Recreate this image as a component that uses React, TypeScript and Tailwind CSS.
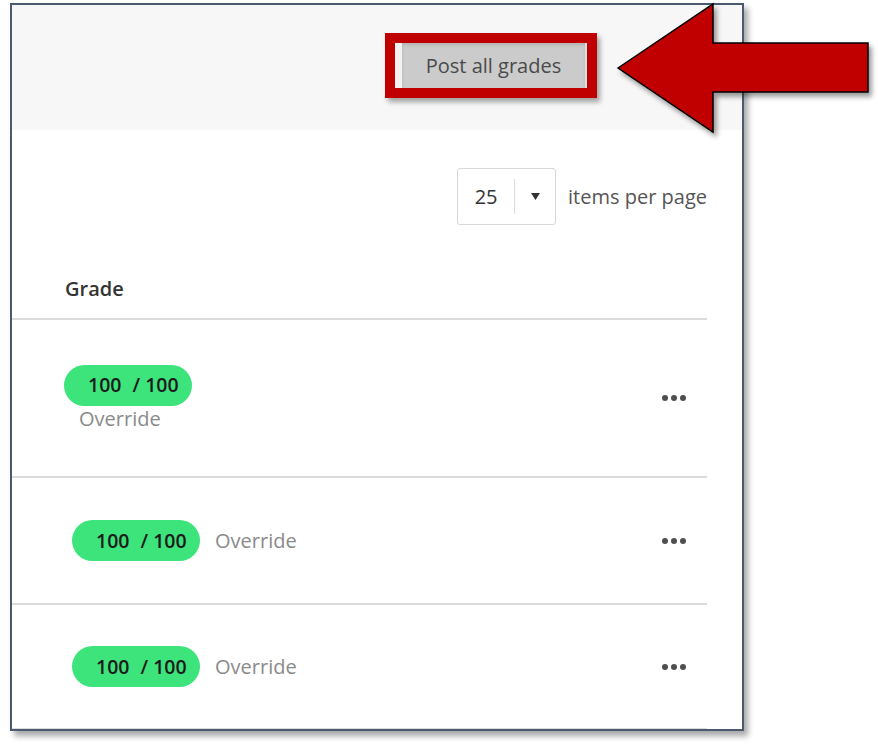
import React from "react";

function Dots() {
  return (
    <div className="flex items-center gap-[3px]">
      <span className="block w-[6px] h-[6px] rounded-full bg-[#4f4f4f]" />
      <span className="block w-[6px] h-[6px] rounded-full bg-[#4f4f4f]" />
      <span className="block w-[6px] h-[6px] rounded-full bg-[#4f4f4f]" />
    </div>
  );
}

function Pill() {
  return (
    <div className="flex items-center h-[41px] w-[128px] rounded-full bg-[#3de37b] pl-[24px] text-[19.5px] font-semibold text-[#1b1b1b] leading-none">
      <span>100</span>
      <span className="ml-[11px]">/ 100</span>
    </div>
  );
}

export default function App() {
  return (
    <div
      className="relative w-[878px] h-[749px] bg-white overflow-hidden"
      style={{ fontFamily: '"Open Sans", "Noto Sans", sans-serif' }}
    >
      <div className="ml-[10px] mt-[3px] w-[734px] h-[728px] border-2 border-[#4b5a70] bg-white shadow-[4px_5px_6px_rgba(0,0,0,0.35)] overflow-hidden flex flex-col">
        {/* header */}
        <div className="h-[125px] shrink-0 bg-[#f7f7f7] pt-[28px] pl-[373px]">
          <div className="w-[212px] h-[65px] border-[10px] border-[#c00000] shadow-[3px_4px_5px_rgba(0,0,0,0.35)]">
            <div className="h-full w-full flex items-center justify-center bg-[#cbcbcb] border-l-[7px] border-l-[#f2f2f2] border-r-[2px] border-r-[#e2e2e2] shadow-[inset_0_2px_3px_rgba(0,0,0,0.12)] text-[20px] text-[#4a4a4a]">
              Post all grades
            </div>
          </div>
        </div>

        <div className="w-[695px] flex flex-col">
          {/* pagination */}
          <div className="mt-[38px] flex justify-end items-center gap-[12px]">
            <div className="w-[99px] h-[57px] border border-[#d8d8d8] rounded-[3px] flex items-center bg-white">
              <span className="w-[56px] text-center text-[20px] text-[#333]">25</span>
              <span className="block w-px h-[35px] bg-[#dddddd]" />
              <span className="flex-1 flex justify-center">
                <svg width="9" height="7" viewBox="0 0 9 7">
                  <polygon points="0,0 9,0 4.5,7" fill="#333" />
                </svg>
              </span>
            </div>
            <span className="text-[20px] text-[#555]">items per page</span>
          </div>

          {/* column header */}
          <div className="h-[93px] flex items-end pb-[16px] pl-[53px]">
            <span className="text-[20px] leading-[26px] font-semibold text-[#333]">Grade</span>
          </div>

          {/* row 1 */}
          <div className="h-[158px] border-t-2 border-[#dcdcdc] flex items-center justify-between pl-[52px] pr-[21px]">
            <div className="flex flex-col">
              <Pill />
              <span className="pl-[15px] text-[20px] leading-[26px] text-[#8a8a8a]">Override</span>
            </div>
            <Dots />
          </div>

          {/* row 2 */}
          <div className="h-[127px] border-t-2 border-[#dcdcdc] flex items-center justify-between pl-[60px] pr-[21px]">
            <div className="flex items-center gap-[15px]">
              <Pill />
              <span className="text-[20px] leading-[26px] text-[#8a8a8a]">Override</span>
            </div>
            <Dots />
          </div>

          {/* row 3 */}
          <div className="h-[127px] border-t-2 border-b-2 border-[#dcdcdc] flex items-center justify-between pl-[60px] pr-[21px]">
            <div className="flex items-center gap-[15px]">
              <Pill />
              <span className="text-[20px] leading-[26px] text-[#8a8a8a]">Override</span>
            </div>
            <Dots />
          </div>
        </div>
      </div>

      {/* annotation arrow */}
      <svg
        className="absolute left-0 top-0 pointer-events-none"
        width="878"
        height="749"
        viewBox="0 0 878 749"
      >
        <defs>
          <filter id="sh" x="-20%" y="-20%" width="140%" height="140%">
            <feDropShadow dx="3" dy="4" stdDeviation="2.5" floodColor="#000" floodOpacity="0.4" />
          </filter>
        </defs>
        <polygon
          points="618,68 713,4 713,43 868,43 868,92 713,92 713,132"
          fill="#c00000"
          stroke="#000"
          strokeWidth="1.5"
          strokeLinejoin="miter"
          filter="url(#sh)"
        />
      </svg>
    </div>
  );
}
